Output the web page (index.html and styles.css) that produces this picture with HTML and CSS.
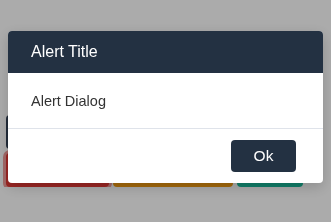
FILE: index.html
```html
<!DOCTYPE html>
<html lang="en">
<head>
    <meta charset="UTF-8">
    <meta name="viewport" content="width=device-width, initial-scale=1.0">
    <title>Alert Dialog</title>
    <link rel="stylesheet" href="styles.css">
</head>
<body>
    <div class="page">
        <button class="btn btn-dark" aria-label="Show alert"></button>
        <div class="btn-row">
            <button class="btn btn-danger" aria-label="Delete"></button>
            <button class="btn btn-warning" aria-label="Warning"></button>
            <button class="btn btn-success" aria-label="Save"></button>
        </div>
    </div>

    <div class="overlay">
        <div class="dialog">
            <div class="dialog-header">Alert Title</div>
            <div class="dialog-body">Alert Dialog</div>
            <div class="dialog-footer">
                <button class="ok">Ok</button>
            </div>
        </div>
    </div>
</body>
</html>
```

FILE: styles.css
```css
body {
    margin: 0;
    background-color: #ffffff;
    font-family: 'Liberation Sans', Arial, sans-serif;
}

.page {
    padding: 115px 6px 0 6px;
    display: flex;
    flex-direction: column;
    gap: 4px;
}

.btn {
    border: none;
    border-radius: 4px;
    height: 34px;
}

.btn-dark {
    background-color: #334155;
    width: 120px;
}

.btn-row {
    display: flex;
    gap: 4px;
}

.btn-danger {
    background-color: #e53935;
    width: 103px;
    box-shadow: 0 0 0 3px rgba(229, 57, 53, 0.5);
}

.btn-warning {
    background-color: #f39c12;
    width: 120px;
}

.btn-success {
    background-color: #1abc9c;
    width: 66px;
}

.overlay {
    position: fixed;
    top: 0;
    left: 0;
    right: 0;
    bottom: 0;
    background-color: rgba(0, 0, 0, 0.33);
    display: flex;
    justify-content: center;
    align-items: flex-start;
    padding-top: 31px;
}

.dialog {
    width: 315px;
    background-color: #fff;
    border-radius: 4px;
    overflow: hidden;
    box-shadow: 0 4px 14px rgba(0, 0, 0, 0.18);
}

.dialog-header {
    background-color: #233142;
    color: #fff;
    height: 42px;
    box-sizing: border-box;
    padding: 12px 23px 0 23px;
    font-size: 16px;
}

.dialog-body {
    height: 56px;
    box-sizing: border-box;
    padding: 20px 23px 0 23px;
    font-size: 14.5px;
    color: #333;
    border-bottom: 1px solid #dfe3ea;
}

.dialog-footer {
    height: 54px;
    display: flex;
    justify-content: flex-end;
    align-items: center;
    padding-right: 27px;
}

.ok {
    width: 65px;
    height: 32px;
    background-color: #233142;
    color: #fff;
    border: none;
    border-radius: 4px;
    font-family: inherit;
    font-size: 15.5px;
}
```
